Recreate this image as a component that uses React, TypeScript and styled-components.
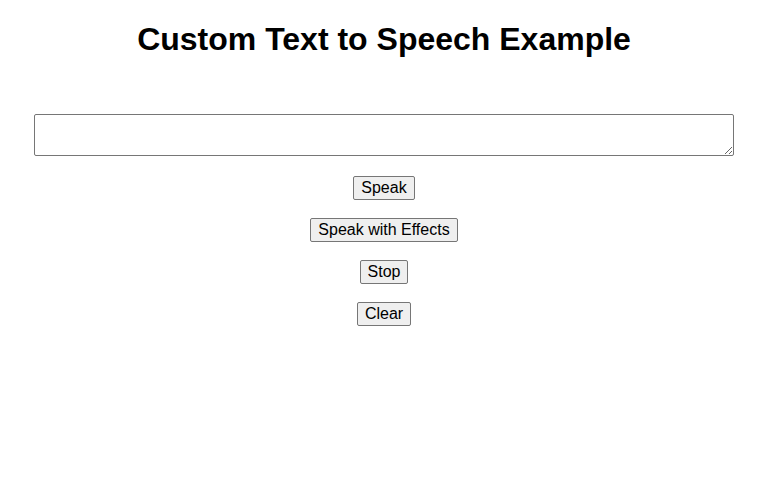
import React from "react";
import styled, { createGlobalStyle } from "styled-components";

const Global = createGlobalStyle`
  html, body { margin: 0; padding: 0; background: #ffffff; }
  body { font-family: "Liberation Sans", Arial, sans-serif; color: #000; }
`;

const Page = styled.div`
  display: flex;
  flex-direction: column;
  align-items: center;
  padding-top: 21px;
`;

const Title = styled.h1`
  margin: 0 0 56px;
  font-size: 32px;
  font-weight: bold;
  line-height: 37px;
  text-align: center;
`;

const TextBox = styled.textarea`
  box-sizing: border-box;
  width: 700px;
  height: 42px;
  margin: 0 0 20px;
  padding: 2px;
  border: 1px solid #767676;
  border-radius: 2px;
  font-family: "Liberation Sans", Arial, sans-serif;
  font-size: 16px;
  background: #fff;
`;

const Actions = styled.div`
  display: flex;
  flex-direction: column;
  align-items: center;
  gap: 18px;
`;

const Button = styled.button`
  box-sizing: border-box;
  height: 24px;
  padding: 0 7px;
  border: 1px solid #767676;
  border-radius: 2px;
  background: #efefef;
  color: #000;
  font-family: "Liberation Sans", Arial, sans-serif;
  font-size: 16px;
  line-height: 20px;
  cursor: pointer;
`;

export default function App() {
  return (
    <>
      <Global />
      <Page>
        <Title>Custom Text to Speech Example</Title>
        <TextBox />
        <Actions>
          <Button>Speak</Button>
          <Button>Speak with Effects</Button>
          <Button>Stop</Button>
          <Button>Clear</Button>
        </Actions>
      </Page>
    </>
  );
}
